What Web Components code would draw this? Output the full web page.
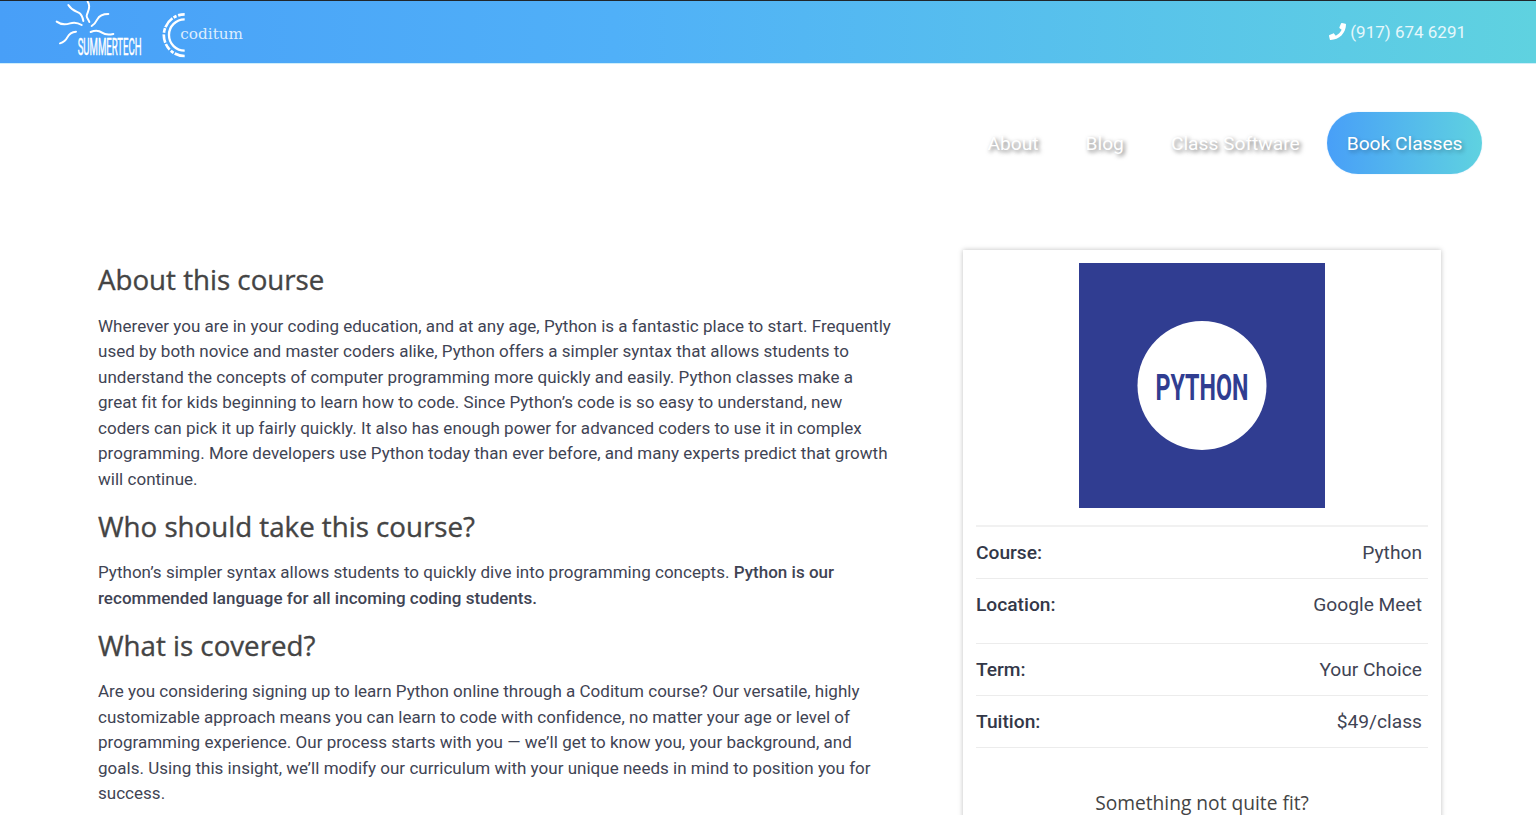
<!DOCTYPE html>
<html lang="en"><head><meta charset="utf-8"><title>Python course</title>
<style>
html,body{margin:0;padding:0;background:#fff;height:815px;overflow:hidden}
body{font-family:Roboto,"Liberation Sans",sans-serif}
b{font-weight:500}
</style></head><body>
<course-page>
  <top-bar phone="(917) 674 6291"></top-bar>
  <main-nav>
    <nav-link>About</nav-link><nav-link>Blog</nav-link><nav-link>Class Software</nav-link><book-button>Book Classes</book-button>
  </main-nav>
  <page-columns>
    <course-text slot="main">
      <h2>About this course</h2>
      <p>Wherever you are in your coding education, and at any age, Python is a fantastic place to start. Frequently used by both novice and master coders alike, Python offers a simpler syntax that allows students to understand the concepts of computer programming more quickly and easily. Python classes make a great fit for kids beginning to learn how to code. Since Python’s code is so easy to understand, new coders can pick it up fairly quickly. It also has enough power for advanced coders to use it in complex programming. More developers use Python today than ever before, and many experts predict that growth will continue.</p>
      <h2>Who should take this course?</h2>
      <p>Python’s simpler syntax allows students to quickly dive into programming concepts. <b>Python is our</b> <b>recommended language for all incoming coding students.</b></p>
      <h2>What is covered?</h2>
      <p>Are you considering signing up to learn Python online through a Coditum course? Our versatile, highly customizable approach means you can learn to code with confidence, no matter your age or level of programming experience. Our process starts with you — we’ll get to know you, your background, and goals. Using this insight, we’ll modify our curriculum with your unique needs in mind to position you for success.</p>
    </course-text>
    <course-card slot="side">
      <info-row label="Course:" value="Python"></info-row>
      <info-row label="Location:" value="Google Meet" tall></info-row>
      <info-row label="Term:" value="Your Choice"></info-row>
      <info-row label="Tuition:" value="$49/class"></info-row>
    </course-card>
  </page-columns>
</course-page>
<script>
function def(name, css, html){
  customElements.define(name, class extends HTMLElement{
    constructor(){super();this.attachShadow({mode:'open'});}
    connectedCallback(){
      const h = typeof html==='function'?html(this):html;
      this.shadowRoot.innerHTML='<style>'+css+'</style>'+h;
    }
  });
}
def('course-page',':host{display:block;height:815px;overflow:hidden}','<slot></slot>');

const rays=[
 'M143 5C156 22 140 38 140 48C140 54 146 60 148 66',
 'M85 15C96 32 108 34 116 38C124 42 128 52 130 63',
 'M205 42C186 42 176 50 172 58C168 66 164 72 155 78',
 'M50 65C62 74 78 74 90 70C102 66 114 68 125 75',
 'M108 95C94 96 86 104 82 112C78 120 72 126 60 130',
 'M152 96C166 90 178 92 186 98C194 104 206 105 220 102'
].map(d=>`<path d="${d}" fill="none" stroke="#fff" stroke-width="6" stroke-linecap="round"/>`).join('');
def('top-bar',`
:host{display:flex;align-items:center;justify-content:space-between;height:62px;border-top:1px solid #20262b;
background:linear-gradient(90deg,#489ff8 0%,#50b0f8 40%,#5fd2e0 100%);color:#e6f7fb;padding:0 70px 0 40px;font:17px/1 Roboto,sans-serif;box-shadow:0 1px 0 #cfeefa}
svg.logo{display:block;width:220px;height:62px}
.ph{display:flex;align-items:center;gap:4px}
.ph svg{width:17px;height:17px;display:block;fill:#fff;margin-top:-2px}
`,el=>`<svg class="logo" viewBox="0 3 660 186" role="img" aria-label="SummerTech and Coditum">
${rays}
<text transform="translate(113 164) scale(.4 1)" fill="#fff" stroke="#fff" stroke-width="1.5" font-family="Roboto" font-size="72">SUMMERTECH</text>
<g fill="none" stroke="#fff">
<path d="M434 43A60 60 0 1 0 434 168" stroke-width="8" stroke-dasharray="20 5 10 4 34 3 14 5 26 4"/>
<path d="M434 58A44 44 0 1 0 434 152" stroke-width="7"/>
</g>
<text x="421" y="116" fill="#fff" font-family="DejaVu Serif" font-size="44" font-weight="400" textLength="188" lengthAdjust="spacingAndGlyphs" fill-opacity=".82">coditum</text>
</svg>
<div class="ph"><svg viewBox="0 0 512 512" aria-hidden="true"><path d="M493.4 24.6l-104-24c-11.3-2.6-22.9 3.3-27.5 13.9l-48 112c-4.2 9.8-1.4 21.3 6.9 28l60.6 49.6c-36 76.7-98.9 140.5-177.2 177.2l-49.6-60.6c-6.8-8.3-18.2-11.1-28-6.9l-112 48C3.9 366.5-2 378.1.6 389.4l24 104C27.1 504.2 36.7 512 48 512c256.1 0 464-207.5 464-464 0-11.2-7.7-20.9-18.6-23.4z"/></svg><span>${el.getAttribute('phone')}</span></div>`);

def('main-nav',`:host{display:flex;justify-content:flex-end;align-items:center;height:62px;padding:49px 54px 0 0}`,'<slot></slot>');
def('nav-link',`:host{display:block;padding:1px 23.5px 0;font:19.2px/1 Roboto,sans-serif;color:#fff;text-shadow:2px 2px 4px rgba(0,0,0,.55)}`,'<slot></slot>');
def('book-button',`:host{display:flex;align-items:center;height:62px;padding:1px 19.5px 0;box-sizing:border-box;margin-left:4px;border-radius:31px;font:19.2px/1 Roboto,sans-serif;color:#fff;background:linear-gradient(90deg,#489ff8,#5fd2e0);text-shadow:2px 2px 4px rgba(0,0,0,.3);box-shadow:0 0 1px rgba(72,159,248,.5)}`,'<slot></slot>');

def('page-columns',`:host{display:flex;justify-content:space-between;padding:76px 95px 0 98px}`,'<slot name="main"></slot><slot name="side"></slot>');
customElements.define('course-text',class extends HTMLElement{
  constructor(){super();const s=this.attachShadow({mode:'open'});
   s.innerHTML=`<style>:host{display:block;width:795px;padding-top:10px;font:17px/25.5px Roboto,sans-serif;letter-spacing:.02px;color:#3f4454}
   ::slotted(h2){font:400 27.7px/38px "Open Sans",sans-serif;letter-spacing:0;color:#444;margin:0 0 15.7px;-webkit-text-stroke:.35px #444}
   ::slotted(p){margin:0 0 14.4px}
   </style><slot></slot>`;}
});
def('course-card',`
:host{display:block;box-sizing:border-box;width:478px;height:640px;padding:13px;background:#fff;box-shadow:0 0 5px rgba(0,0,0,.25);margin-bottom:-100px}
.pic{display:block;width:246px;height:245px;margin:0 auto 17px}
.rows{border-top:2px solid #f1f1f1}
.more{font:400 19.2px/24px "Open Sans",sans-serif;color:#444;text-align:center;margin-top:43px}
`,`<svg class="pic" viewBox="0 0 246 245" role="img" aria-label="Python"><rect width="246" height="245" fill="#303d91"/><circle cx="123" cy="122.500" r="64.500" fill="#fff"/><text x="123" y="137" text-anchor="middle" font-family="Roboto" font-weight="700" font-size="36" fill="#303d91" textLength="93" lengthAdjust="spacingAndGlyphs">PYTHON</text></svg>
<div class="rows"><slot></slot></div><div class="more">Something not quite fit?</div>`);
def('info-row',`
:host{display:flex;justify-content:space-between;box-sizing:border-box;height:52px;border-bottom:1px solid #ececec;padding:12px 6px 0 0;font:19.2px/27px Roboto,sans-serif;color:#3f4454}
:host([tall]){height:65px}
b{font-weight:500;color:#333848}
`,el=>`<b>${el.getAttribute('label')}</b><span>${el.getAttribute('value')}</span>`);
</script>
</body></html>
